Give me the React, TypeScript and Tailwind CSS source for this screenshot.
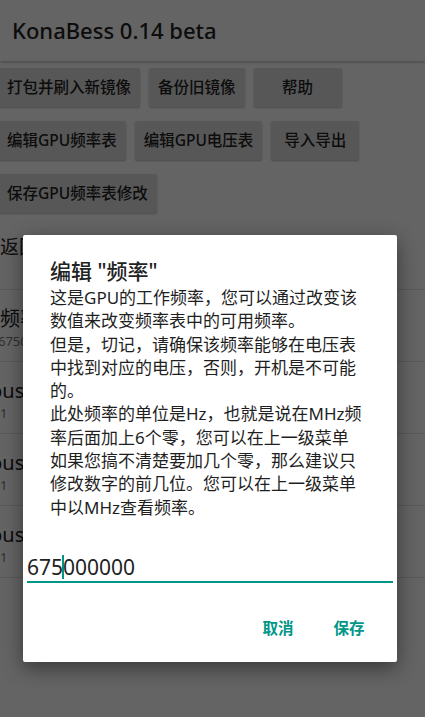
import React from 'react'

const font = { fontFamily: '"Noto Sans", "Noto Sans CJK SC", sans-serif' }

function ActionButton({ label, wide }: { label: string; wide?: boolean }) {
  return (
    <div
      className={`flex h-[39px] items-center justify-center rounded-[2px] bg-[#d9d9d9] px-[9px] text-[15.5px] font-medium text-[#222] shadow-[0_1px_2px_rgba(0,0,0,0.25)] ${wide ? 'min-w-[88px]' : ''}`}
    >
      {label}
    </div>
  )
}

const rows = [
  { title: '频率', sub: '675000000' },
  { title: 'bus_max', sub: '1' },
  { title: 'bus_min', sub: '1' },
  { title: 'bus_freq', sub: '1' },
]

const bodyLines = [
  '这是GPU的工作频率，您可以通过改变该',
  '数值来改变频率表中的可用频率。',
  '但是，切记，请确保该频率能够在电压表',
  '中找到对应的电压，否则，开机是不可能',
  '的。',
  '此处频率的单位是Hz，也就是说在MHz频',
  '率后面加上6个零，您可以在上一级菜单',
  '如果您搞不清楚要加几个零，那么建议只',
  '修改数字的前几位。您可以在上一级菜单',
  '中以MHz查看频率。',
]

export default function App() {
  return (
    <div className="relative h-[717px] w-[425px] overflow-hidden bg-[#fafafa]" style={font}>
      {/* App bar */}
      <div className="flex h-[61px] items-center bg-[#fafafa] pl-[12px] shadow-[0_1px_3px_rgba(0,0,0,0.3)]">
        <span className="text-[22px] font-medium text-[#222]">KonaBess 0.14 beta</span>
      </div>

      {/* Buttons */}
      <div className="-ml-[2px] flex flex-col gap-[14px] pt-[7px]">
        <div className="flex gap-[9px]">
          <ActionButton label="打包并刷入新镜像" />
          <ActionButton label="备份旧镜像" />
          <ActionButton label="帮助" wide />
        </div>
        <div className="flex gap-[9px]">
          <ActionButton label="编辑GPU频率表" />
          <ActionButton label="编辑GPU电压表" />
          <ActionButton label="导入导出" wide />
        </div>
        <div className="flex gap-[9px]">
          <ActionButton label="保存GPU频率表修改" />
        </div>
      </div>

      {/* List */}
      <div className="mt-[5px] flex flex-col">
        <div className="flex h-[72px] flex-col border-b border-[#dcdcdc] pt-[16px]">
          <span className="text-[19px] leading-[26px] text-[#222]">返回上一级</span>
        </div>
        {rows.map((r, i) => (
          <div key={i} className="flex h-[72px] flex-col border-b border-[#dcdcdc] pt-[16px]">
            <span className={`text-[20px] leading-[26px] text-[#222] ${i > 0 ? '-ml-[10px]' : ''}`}>{r.title}</span>
            <span className={`text-[13px] leading-[18px] text-[#777] ${i === 0 ? '-ml-[2px]' : ''}`}>{r.sub}</span>
          </div>
        ))}
      </div>

      {/* Backdrop */}
      <div className="absolute inset-0 bg-black/60" />

      {/* Dialog */}
      <div className="absolute left-[23px] top-[235px] flex w-[374px] flex-col rounded-[2px] bg-white pb-[15px] pt-[23px] shadow-[0_6px_20px_rgba(0,0,0,0.45)]">
        <div className="px-[27px] text-[21px] font-medium leading-[26px] text-[#222]">编辑 "频率"</div>
        <div className="mt-[2px] px-[27px] text-[17px] leading-[23.3px] text-[#1f1f1f]">
          {bodyLines.map((l, i) => (
            <div key={i} className="whitespace-nowrap">
              {l}
            </div>
          ))}
        </div>

        <div className="mx-[4px] mt-[35px] flex items-center border-b-2 border-[#009688] pb-[1px] text-[21px] leading-[26px] text-[#222]">
          <span>675</span>
          <span className="-mx-[1px] h-[24px] w-[2px] bg-[#009688]" />
          <span>000000</span>
        </div>

        <div className="mt-[28px] flex justify-end gap-[7px] pr-[16px]">
          <div className="flex h-[36px] w-[64px] items-center justify-center text-[15.5px] font-bold text-[#009688]">取消</div>
          <div className="flex h-[36px] w-[64px] items-center justify-center text-[15.5px] font-bold text-[#009688]">保存</div>
        </div>
      </div>
    </div>
  )
}
